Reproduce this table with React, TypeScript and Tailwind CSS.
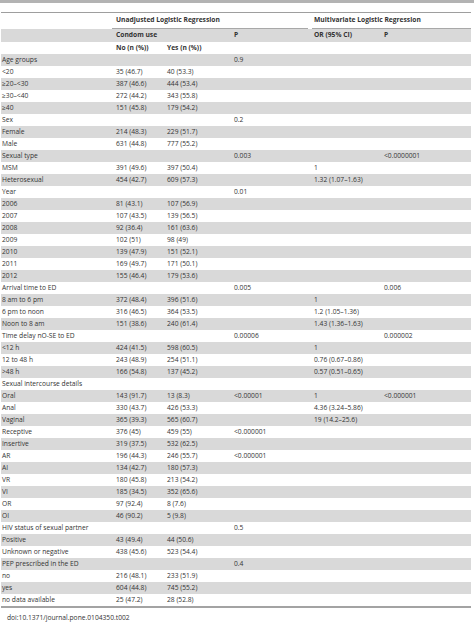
const grid = 'grid grid-cols-[111px_51px_67px_80px_70px_91px]'

type Row = [string, string?, string?, string?, string?, string?]

const rows: Row[] = [
  ['Age groups', '', '', '0.9'],
  ['<20', '35 (46.7)', '40 (53.3)'],
  ['≥20–<30', '387 (46.6)', '444 (53.4)'],
  ['≥30–<40', '272 (44.2)', '343 (55.8)'],
  ['≥40', '151 (45.8)', '179 (54.2)'],
  ['Sex', '', '', '0.2'],
  ['Female', '214 (48.3)', '229 (51.7)'],
  ['Male', '631 (44.8)', '777 (55.2)'],
  ['Sexual type', '', '', '0.003', '', '<0.0000001'],
  ['MSM', '391 (49.6)', '397 (50.4)', '', '1'],
  ['Heterosexual', '454 (42.7)', '609 (57.3)', '', '1.32 (1.07–1.63)'],
  ['Year', '', '', '0.01'],
  ['2006', '81 (43.1)', '107 (56.9)'],
  ['2007', '107 (43.5)', '139 (56.5)'],
  ['2008', '92 (36.4)', '161 (63.6)'],
  ['2009', '102 (51)', '98 (49)'],
  ['2010', '139 (47.9)', '151 (52.1)'],
  ['2011', '169 (49.7)', '171 (50.1)'],
  ['2012', '155 (46.4)', '179 (53.6)'],
  ['Arrival time to ED', '', '', '0.005', '', '0.006'],
  ['8 am to 6 pm', '372 (48.4)', '396 (51.6)', '', '1'],
  ['6 pm to noon', '316 (46.5)', '364 (53.5)', '', '1.2 (1.05–1.36)'],
  ['Noon to 8 am', '151 (38.6)', '240 (61.4)', '', '1.43 (1.36–1.63)'],
  ['Time delay nO-SE to ED', '', '', '0.00006', '', '0.000002'],
  ['<12 h', '424 (41.5)', '598 (60.5)', '', '1'],
  ['12 to 48 h', '243 (48.9)', '254 (51.1)', '', '0.76 (0.67–0.86)'],
  ['>48 h', '166 (54.8)', '137 (45.2)', '', '0.57 (0.51–0.65)'],
  ['Sexual intercourse details'],
  ['Oral', '143 (91.7)', '13 (8.3)', '<0.00001', '1', '<0.000001'],
  ['Anal', '330 (43.7)', '426 (53.3)', '', '4.36 (3.24–5.86)'],
  ['Vaginal', '365 (39.3)', '565 (60.7)', '', '19 (14.2–25.6)'],
  ['Receptive', '376 (45)', '459 (55)', '<0.000001'],
  ['Insertive', '319 (37.5)', '532 (62.5)'],
  ['AR', '196 (44.3)', '246 (55.7)', '<0.000001'],
  ['AI', '134 (42.7)', '180 (57.3)'],
  ['VR', '180 (45.8)', '213 (54.2)'],
  ['VI', '185 (34.5)', '352 (65.6)'],
  ['OR', '97 (92.4)', '8 (7.6)'],
  ['OI', '46 (90.2)', '5 (9.8)'],
  ['HIV status of sexual partner', '', '', '0.5'],
  ['Positive', '43 (49.4)', '44 (50.6)'],
  ['Unknown or negative', '438 (45.6)', '523 (54.4)'],
  ['PEP prescribed in the ED', '', '', '0.4'],
  ['no', '216 (48.1)', '233 (51.9)'],
  ['yes', '604 (44.8)', '745 (55.2)'],
  ['no data available', '25 (47.2)', '28 (52.8)'],
]

export default function App() {
  return (
    <div
      className="h-[622px] w-[474px] overflow-hidden bg-white text-[6.7px] text-[#333]"
      style={{ fontFamily: '"Open Sans", "Noto Sans", sans-serif' }}
    >
      <div className="h-[3px] bg-[#b3b3b3]" />
      <div className="ml-[1px] mt-[9px] w-[470px]">
        <div className="h-px bg-[#9e9e9e]" />

        <div className={`${grid} h-[16px] font-bold`}>
          <div />
          <div className="col-span-3 mr-[2px] flex items-center border-b border-[#a8a8a8] pl-[4px]">
            Unadjusted Logistic Regression
          </div>
          <div className="col-span-2 ml-[2px] flex items-center border-b border-[#a8a8a8] pl-[2px]">
            Multivariate Logistic Regression
          </div>
        </div>

        <div className={`${grid} h-[13px] items-center bg-[#d9d9d9] font-bold`}>
          <div />
          <div className="col-span-2 pl-[4px]">Condom use</div>
          <div className="pl-[4px]">P</div>
          <div className="pl-[4px]">OR (95% CI)</div>
          <div className="pl-[4px]">P</div>
        </div>

        <div className={`${grid} h-[12px] items-center font-bold`}>
          <div />
          <div className="pl-[4px]">No (n (%))</div>
          <div className="pl-[4px]">Yes (n (%))</div>
        </div>

        {rows.map((row, i) => (
          <div
            key={row[0]}
            className={`${grid} h-[12px] items-center ${i % 2 === 0 ? 'bg-[#d9d9d9]' : ''}`}
          >
            {[0, 1, 2, 3, 4, 5].map((c) => (
              <div key={c} className={`whitespace-nowrap ${c === 0 ? 'pl-[1px]' : 'pl-[4px]'}`}>
                {row[c] ?? ''}
              </div>
            ))}
          </div>
        ))}

        <div className="h-[2px] bg-[#a3a3a3]" />
      </div>
      <p className="ml-[7px] mt-[6px] leading-[8px]">doi:10.1371/journal.pone.0104350.t002</p>
    </div>
  )
}
